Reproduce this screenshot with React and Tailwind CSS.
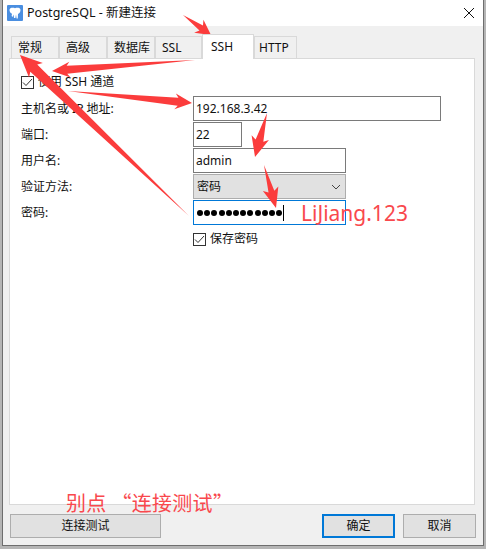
// arrow: thin tail, wider towards the head, then barbs and tip
function arrowPoints(x1, y1, x2, y2, neck, barb, headLen) {
  const len = Math.hypot(x2 - x1, y2 - y1);
  const ux = (x2 - x1) / len;
  const uy = (y2 - y1) / len;
  const nx = -uy;
  const ny = ux;
  const bx = x2 - ux * headLen;
  const by = y2 - uy * headLen;
  const nkx = x2 - ux * (headLen - 3);
  const nky = y2 - uy * (headLen - 3);
  const pts = [
    [x1, y1],
    [nkx + nx * neck, nky + ny * neck],
    [bx + nx * barb, by + ny * barb],
    [x2, y2],
    [bx - nx * barb, by - ny * barb],
    [nkx - nx * neck, nky - ny * neck],
  ];
  return pts.map((p) => p.join(",")).join(" ");
}

const arrows = [
  [183, 15, 211, 35, 3, 8, 15],
  [195, 60, 52, 71, 4, 8, 18],
  [68, 91, 192, 103, 4, 8, 17],
  [189, 216, 20, 55, 5, 10, 22],
  [267, 113, 255, 157, 4, 9, 20],
  [264, 165, 276, 208, 3, 8, 20],
];

const dots = [...Array(12).keys()];

function Tab({ label, active, className }) {
  if (active) {
    return (
      <div className={`relative z-10 -mb-px flex h-[25px] items-center border border-b-0 border-[#d9d9d9] bg-white pl-[8px] ${className}`}>
        {label}
      </div>
    );
  }
  return (
    <div className={`mt-[2px] flex h-[22px] items-center border border-b-0 border-[#d9d9d9] bg-[#f0f0f0] pl-[6px] ${className}`}>
      {label}
    </div>
  );
}

function Check() {
  return (
    <div className="flex h-[13px] w-[13px] shrink-0 items-center justify-center border border-[#333] bg-white">
      <svg width="11" height="11" viewBox="0 0 11 11" fill="none" stroke="#333" strokeWidth="1">
        <path d="M1 5.5 L4 8.5 L10 2" />
      </svg>
    </div>
  );
}

function Row({ label, className, children }) {
  return (
    <div className={`flex items-center ${className || ""}`}>
      <div className="w-[183px] shrink-0 pl-[11px]">{label}</div>
      {children}
    </div>
  );
}

function Input({ children, className }) {
  return (
    <div className={`flex h-[25px] items-center border border-[#7a7a7a] bg-white pl-[2px] ${className}`}>
      {children}
    </div>
  );
}

function Button({ children, className }) {
  return (
    <div className={`flex h-[24px] items-center justify-center border border-[#adadad] bg-[#e1e1e1] text-[#111] ${className}`}>
      {children}
    </div>
  );
}

export default function App() {
  return (
    <div className="relative h-[549px] w-[486px] overflow-hidden bg-[#b5b5b5] font-['Noto_Sans','Noto_Sans_CJK_SC',sans-serif] text-[12px] text-[#111]">
      <div className="ml-[2px] flex h-[546px] w-[482px] flex-col border border-t-0 border-[#6e6e6e] bg-[#f0f0f0]">
        <div className="flex h-[26px] shrink-0 items-center justify-between bg-white pr-[7px] pl-[4px]">
          <div className="flex items-center gap-[4px] text-[12.5px]">
            <svg width="16" height="16" viewBox="0 0 16 16">
              <rect width="16" height="16" rx="1" fill="#4a8ee0" />
              <path d="M2.5 5 C2.5 2.5 6 2.5 8 3.2 C10 2.5 13.5 2.5 13.5 5 C13.5 7.5 12 8.5 11 9 L10.8 13.5 L9.6 13.5 L9 9.5 L8.4 13 L7 13 L6.6 9.5 L5.6 12 L4.6 11 L5 8.8 C3.8 8.2 2.5 7 2.5 5 Z" fill="#fff" />
            </svg>
            <span>PostgreSQL - 新建连接</span>
          </div>
          <svg width="14" height="14" viewBox="0 0 14 14" stroke="#111" strokeWidth="1" fill="none">
            <path d="M2 2 L12 12 M12 2 L2 12" />
          </svg>
        </div>

        <div className="flex h-[32px] shrink-0 items-end pl-[8px]">
          <Tab label="常规" className="w-[48px]" />
          <Tab label="高级" className="w-[48px]" />
          <Tab label="数据库" className="w-[48px]" />
          <Tab label="SSL" className="w-[47px]" />
          <Tab label="SSH" active className="w-[52px]" />
          <Tab label="HTTP" className="w-[43px] !pl-[4px]" />
        </div>

        <div className="ml-[6px] flex h-[447px] w-[466px] shrink-0 flex-col border border-[#d9d9d9] bg-white">
          <div className="mt-[14px] flex items-center gap-[4px] pl-[11px]">
            <Check />
            <span>使用 SSH 通道</span>
          </div>
          <Row label="主机名或 IP 地址:" className="mt-[5px]">
            <Input className="w-[248px]">192.168.3.42</Input>
          </Row>
          <Row label="端口:" className="mt-px">
            <Input className="w-[49px]">22</Input>
          </Row>
          <Row label="用户名:" className="mt-px">
            <Input className="w-[153px]">admin</Input>
          </Row>
          <Row label="验证方法:" className="mt-px">
            <div className="flex h-[25px] w-[153px] items-center justify-between border border-[#adadad] bg-[#e1e1e1] pr-[4px] pl-[3px]">
              <span>密码</span>
              <svg width="10" height="6" viewBox="0 0 10 6" fill="none" stroke="#444" strokeWidth="1">
                <path d="M1 1 L5 5 L9 1" />
              </svg>
            </div>
          </Row>
          <Row label="密码:" className="mt-px">
            <div className="flex h-[25px] w-[153px] items-center border border-[#0078d7] bg-white pl-[3px]">
              <div className="flex gap-[1.2px]">
                {dots.map((d) => (
                  <span key={d} className="h-[6px] w-[6px] rounded-full bg-black" />
                ))}
              </div>
              <span className="ml-[1px] h-[16px] w-px bg-black" />
            </div>
          </Row>
          <div className="mt-[5px] flex items-center gap-[4px] pl-[183px]">
            <Check />
            <span>保存密码</span>
          </div>
        </div>

        <div className="mt-[9px] flex items-start pr-[7px] pl-[7px]">
          <Button className="w-[151px]">连接测试</Button>
          <Button className="ml-auto w-[73px] border-2 !border-[#0078d7]">确定</Button>
          <Button className="ml-[8px] w-[73px]">取消</Button>
        </div>
      </div>

      <svg className="pointer-events-none absolute inset-0" width="486" height="549" fill="#fb3c3c">
        {arrows.map((a, i) => (
          <polygon key={i} points={arrowPoints(...a)} />
        ))}
      </svg>
      <div className="absolute top-[199px] left-[301px] text-[21px] leading-[28px] text-[#f9484d]">LiJiang.123</div>
      <div className="absolute top-[490px] left-[66px] font-['Noto_Sans_CJK_SC',sans-serif] text-[20px] leading-[26px] tracking-[0.3px] whitespace-nowrap text-[#f9484d]">别点 “连接测试”</div>
    </div>
  );
}
